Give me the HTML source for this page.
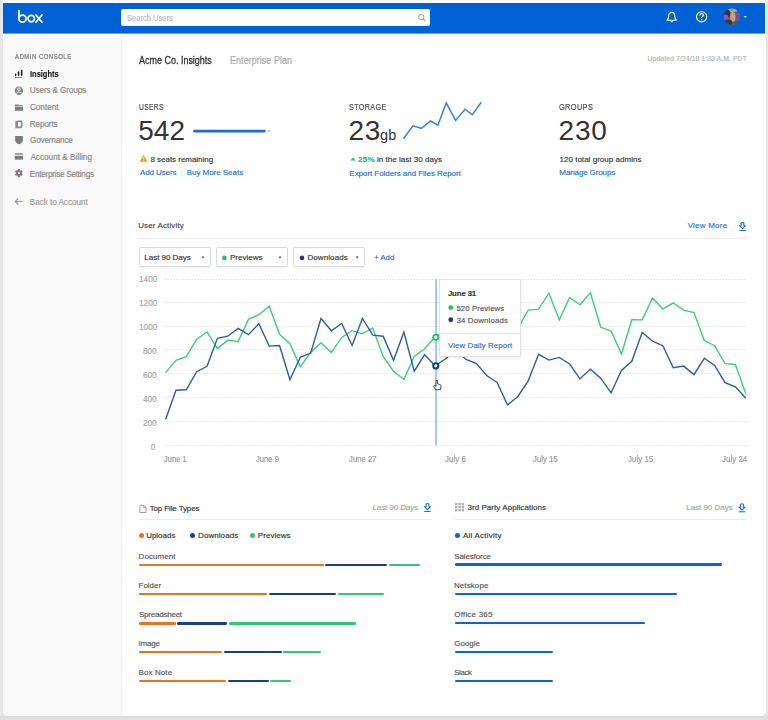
<!DOCTYPE html>
<html><head><meta charset="utf-8">
<style>
html,body{margin:0;padding:0;}
body{width:768px;height:720px;position:relative;overflow:hidden;background:#e6e6e6;font-family:"Liberation Sans",sans-serif;}
.abs{position:absolute;}
.t{position:absolute;white-space:nowrap;line-height:1;-webkit-text-stroke:0.15px currentColor;}
.win{position:absolute;left:3px;top:3px;width:762px;height:713px;background:#fff;border-radius:0 0 5px 5px;overflow:hidden;}
.hdr{position:absolute;left:3px;top:3px;width:762px;height:30px;background:#0061d5;}
.side{position:absolute;left:4px;top:34.6px;width:117px;height:681.4px;background:#f9f9f9;border-radius:0 0 0 5px;border-right:1px solid #f1f1f1;}
.search{position:absolute;left:121px;top:8.5px;width:309px;height:17.5px;background:#fff;border-radius:2px;}
.dd{position:absolute;top:247px;height:20px;border:1px solid #dadada;border-radius:2px;background:#fff;box-shadow:0 1px 1px rgba(0,0,0,0.04);box-sizing:border-box;}
.bar{position:absolute;height:2.4px;border-radius:1.2px;}
.o{background:#e8741c}.n{background:#1b3f8c}.g{background:#2fc77a}.b{background:#0b63d6}
.hl{position:absolute;height:1px;background:#ececec;}
.dot{position:absolute;width:5px;height:5px;border-radius:50%;}
.tip{position:absolute;left:439.1px;top:279.2px;width:81.6px;height:78.2px;background:#fff;border:1px solid #e2e2e2;box-sizing:border-box;box-shadow:0 1px 3px rgba(0,0,0,0.08);border-radius:1px;}
</style></head><body>
<div class="abs" style="left:3px;top:0;width:763px;height:3px;background:#f9f9f9;"></div>
<div class="abs" style="left:3px;top:1px;width:763px;height:715px;background:#fdfdfd;border-radius:0 0 5px 5px;"></div>
<div class="abs" style="left:0;top:716px;width:768px;height:4px;background:linear-gradient(#dcdcdc,#e3e3e3);"></div>
<div class="win"></div>
<div class="side"></div>
<svg class="abs" style="left:0;top:0" width="768" height="40"><rect x="3" y="3" width="762" height="30.6" fill="#0061d5"/></svg>
<div class="abs" style="left:122px;top:34px;width:643px;height:9px;background:linear-gradient(#f9f9f9,#fff);"></div>
<div class="search"></div>

<!-- header svg icons -->
<svg class="abs" style="left:0;top:0" width="768" height="40" viewBox="0 0 768 40">
 <g fill="none" stroke="#fff" stroke-width="1.75" stroke-linecap="round">
  <line x1="18.9" y1="10.7" x2="18.9" y2="18.6"/>
  <circle cx="22.5" cy="18.6" r="3.6"/>
  <circle cx="31.25" cy="18.6" r="3.25"/>
  <line x1="35.9" y1="15" x2="42" y2="22.2"/>
  <line x1="42" y1="15" x2="35.9" y2="22.2"/>
 </g>
 <!-- search icon -->
 <g fill="none" stroke="#a6a6a6" stroke-width="1.1">
  <circle cx="421.3" cy="17.1" r="2.6"/>
  <line x1="423.2" y1="19" x2="425.5" y2="21.2"/>
 </g>
 <!-- bell -->
 <g fill="none" stroke="#fff" stroke-width="1.1" stroke-linejoin="round">
  <path d="M667,20.2 C668.6,19 668.6,17.8 668.6,16.2 C668.6,13.8 670,12.4 671.7,12.4 C673.4,12.4 674.8,13.8 674.8,16.2 C674.8,17.8 674.8,19 676.4,20.2 Z"/>
 </g>
 <rect x="670.6" y="21" width="2.2" height="1.2" rx="0.6" fill="#fff"/>
 <!-- help -->
 <circle cx="701.6" cy="16.8" r="5.1" fill="none" stroke="#fff" stroke-width="1.1"/>
 <path d="M699.9,15.4 C699.9,13.1 703.4,13.1 703.4,15.1 C703.4,16.3 701.7,16.4 701.7,17.9" fill="none" stroke="#fff" stroke-width="1.05"/>
 <circle cx="701.7" cy="19.8" r="0.65" fill="#fff"/>
 <!-- avatar -->
 <defs><mask id="av"><circle cx="731.9" cy="16.7" r="8.2" fill="#fff"/></mask></defs>
 <g mask="url(#av)">
  <rect x="723" y="8" width="18" height="18" fill="#6a605a"/>
  <ellipse cx="731.5" cy="9.5" rx="7" ry="2.8" fill="#a8a098"/>
  <ellipse cx="727" cy="13.8" rx="3.5" ry="4" fill="#3d3531"/>
  <ellipse cx="725.6" cy="17.2" rx="2.6" ry="2.4" fill="#9450e2"/>
  <ellipse cx="738.8" cy="16" rx="2.2" ry="3.4" fill="#7a40e4"/>
  <ellipse cx="732.8" cy="17" rx="2.7" ry="5" fill="#c4a08a"/>
  <ellipse cx="728.5" cy="22.5" rx="4" ry="3" fill="#3f3835"/>
  <ellipse cx="736.5" cy="23" rx="3" ry="2.2" fill="#5a534f"/>
 </g>
 <path d="M743.6,16 L747,16 L745.3,18 Z" fill="#e6eefa"/>
</svg>

<!-- sidebar icons -->
<svg class="abs" style="left:0;top:40px" width="121" height="180" viewBox="0 40 121 180">
 <g fill="#1e1e1e">
  <rect x="14.9" y="73.4" width="1.5" height="2.6" rx="0.7"/>
  <rect x="17.8" y="71.2" width="1.5" height="4.8" rx="0.7"/>
  <rect x="20.9" y="69.8" width="1.5" height="6.2" rx="0.7"/>
 </g>
 <rect x="15" y="77" width="7.3" height="1" fill="#8a8a8a"/>
 <circle cx="18.9" cy="90.7" r="4.2" fill="#8a8a8a"/>
 <circle cx="18.9" cy="89.2" r="1.3" fill="none" stroke="#f9f9f9" stroke-width="0.8"/>
 <path d="M16.2,93.6 C16.8,91.6 21,91.6 21.6,93.6" fill="none" stroke="#f9f9f9" stroke-width="0.8"/>
 <path d="M15,104.4 L18,104.4 L18.8,105.3 L23,105.3 L23,110.8 L15,110.8 Z" fill="#7c7c7c"/>
 <rect x="15" y="106.3" width="8" height="0.6" fill="#f9f9f9"/>
 <path d="M15.4,121 L20.5,120.2 C22,120.2 22.6,121.5 22.6,124.2 C22.6,127 22,128.3 20.5,128.3 L15.4,128.3 Z" fill="#8a8a8a"/>
 <path d="M18,122 L19.8,122 C20.8,122 21,123 21,124.2 C21,125.4 20.8,126.5 19.8,126.5 L18,126.5 Z" fill="#f9f9f9"/>
 <path d="M15.2,136 L22.8,136 L22.8,140.5 C22.8,142.5 20.5,143.8 19,144.3 C17.5,143.8 15.2,142.5 15.2,140.5 Z" fill="#7a7a7a"/>
 <rect x="14.7" y="153.3" width="8.3" height="1.3" fill="#7a7a7a"/>
 <rect x="14.7" y="155.8" width="8.3" height="3.8" fill="#7a7a7a"/>
 <g transform="translate(18.9,173.1)">
  <g fill="#7a7a7a">
   <circle r="3"/>
   <rect x="-1" y="-4.1" width="2" height="8.2" rx="0.3"/>
   <rect x="-1" y="-4.1" width="2" height="8.2" rx="0.3" transform="rotate(60)"/>
   <rect x="-1" y="-4.1" width="2" height="8.2" rx="0.3" transform="rotate(120)"/>
  </g>
  <circle r="1.1" fill="#f9f9f9"/>
 </g>
 <g fill="none" stroke="#9a9a9a" stroke-width="1.1">
  <line x1="15.2" y1="201.5" x2="22.2" y2="201.5"/>
  <path d="M18.2,198.5 L15.2,201.5 L18.2,204.5"/>
 </g>
</svg>

<!-- metrics graphics -->
<svg class="abs" style="left:0;top:0" width="768" height="240" viewBox="0 0 768 240">
 <rect x="193" y="129.8" width="72.8" height="2.6" rx="1.3" fill="#1a6ad8"/>
 <circle cx="268.8" cy="131.1" r="1.3" fill="#b5cff3"/>
 <path d="M140.1,161.4 L143.55,155.2 L147,161.4 Z" fill="#f39a2e" stroke="#f39a2e" stroke-width="0.6" stroke-linejoin="round"/>
 <rect x="143.1" y="157.3" width="0.8" height="2" fill="#fff"/>
 <rect x="143.1" y="160" width="0.8" height="0.7" fill="#fff"/>
 <rect x="181.5" y="168.5" width="0.7" height="8" fill="#dcdcdc"/>
 <path d="M350.4,160.6 L353,157.4 L355.6,160.6 Z" fill="#26b96b"/>
 <polyline points="403.5,138.75 412.9,125.8 421.25,128.3 430.6,121 437.9,125.2 446.25,102.9 455.6,120.4 465,109.2 472.3,114.8 481.25,102.3" fill="none" stroke="#3a82e2" stroke-width="1.5"/>
</svg>

<div class="hl" style="left:139px;top:238px;width:608px;"></div>
<div class="dd" style="left:139px;width:72px;"></div>
<div class="dd" style="left:216px;width:72px;"></div>
<div class="dd" style="left:293px;width:72px;"></div>
<svg class="abs" style="left:0;top:240px" width="768" height="30" viewBox="0 240 768 30">
 <g fill="#444">
  <path d="M201.6,256.6 L204.4,256.6 L203,258.4 Z"/>
  <path d="M278.6,256.6 L281.4,256.6 L280,258.4 Z"/>
  <path d="M355.8,256.6 L358.6,256.6 L357.2,258.4 Z"/>
 </g>
 <circle cx="224.4" cy="257.9" r="2.3" fill="#22c25a"/>
 <circle cx="302" cy="257.9" r="2.3" fill="#1a3b8a"/>
</svg>
<svg class="abs" style="left:730px;top:215px" width="20" height="20" viewBox="730 215 20 20"><path d="M741.10,223.20 Q742.50,221.70 743.90,223.20 L743.90,225.70 L745.50,225.70 L742.50,228.70 L739.50,225.70 L741.10,225.70 Z" fill="none" stroke="#1b6fdb" stroke-width="1.1" stroke-linejoin="round"/><rect x="739.30" y="229.90" width="6.4" height="1.1" fill="#1b6fdb"/></svg>

<svg class="abs" width="768" height="720" viewBox="0 0 768 720" style="left:0;top:0">
<g stroke="#e4e4e4" stroke-width="1" stroke-dasharray="1.5 1.5"><line x1="164.5" y1="279.5" x2="747" y2="279.5" /><line x1="164.5" y1="302.5" x2="747" y2="302.5" /><line x1="164.5" y1="326.5" x2="747" y2="326.5" /><line x1="164.5" y1="349.5" x2="747" y2="349.5" /><line x1="164.5" y1="373.5" x2="747" y2="373.5" /><line x1="164.5" y1="397.5" x2="747" y2="397.5" /><line x1="164.5" y1="421.5" x2="747" y2="421.5" /><line x1="164.5" y1="445.5" x2="747" y2="445.5" /></g>
<polyline points="165.60,372.60 175.96,360.30 186.32,356.70 196.68,339.20 207.04,332.00 217.40,348.60 227.76,340.10 238.12,341.60 248.48,319.40 258.84,314.70 269.20,306.20 279.56,334.35 289.92,343.70 300.28,366.80 310.64,352.40 321.00,342.80 331.36,352.40 341.72,337.40 352.08,330.70 362.44,333.80 372.80,327.90 383.16,356.40 393.52,371.20 403.88,379.50 414.24,356.40 424.60,348.80 434.96,337.30 445.32,330.00 455.68,325.00 466.04,322.00 476.40,318.00 486.76,322.00 497.12,326.00 507.48,330.00 517.84,328.50 528.20,310.10 538.56,309.20 548.92,293.20 559.28,319.90 569.64,297.50 580.00,304.70 590.36,292.60 600.72,327.30 611.08,331.00 621.44,353.90 631.80,319.70 642.16,319.90 652.52,297.90 662.88,309.10 673.24,302.90 683.60,310.10 693.96,312.60 704.32,340.60 714.68,345.70 725.04,363.60 735.40,364.50 745.76,393.70" fill="none" stroke="#3fce78" stroke-width="1.4" stroke-linejoin="miter"/>
<polyline points="165.60,419.60 175.96,390.30 186.32,389.80 196.68,371.70 207.04,366.30 217.40,338.30 227.76,336.20 238.12,328.40 248.48,334.70 258.84,323.70 269.20,346.10 279.56,345.50 289.92,379.80 300.28,357.30 310.64,353.10 321.00,318.50 331.36,330.70 341.72,323.50 352.08,345.50 362.44,318.50 372.80,335.10 383.16,336.20 393.52,360.30 403.88,332.00 414.24,371.20 424.60,354.60 434.96,365.80 445.32,359.00 455.68,350.00 466.04,359.50 476.40,363.50 486.76,375.50 497.12,382.50 507.48,405.00 517.84,396.50 528.20,381.00 538.56,354.30 548.92,360.10 559.28,357.40 569.64,364.00 580.00,378.80 590.36,369.10 600.72,378.20 611.08,392.80 621.44,370.40 631.80,361.30 642.16,332.50 652.52,341.20 662.88,345.70 673.24,367.80 683.60,366.10 693.96,374.60 704.32,358.30 714.68,365.50 725.04,382.60 735.40,386.90 745.76,398.20" fill="none" stroke="#2d5da6" stroke-width="1.4" stroke-linejoin="miter"/>
<rect x="435.15" y="279.2" width="1.8" height="166" fill="#9cc2f0"/>
</svg>
<div class="tip"></div>
<div class="hl" style="left:440px;top:333px;width:80px;background:#e6e6e6"></div>
<svg class="abs" style="left:420px;top:290px" width="40" height="110" viewBox="420 290 40 110">
 <circle cx="435.8" cy="337.3" r="2.6" fill="#fff" stroke="#22c25a" stroke-width="1.8"/>
 <circle cx="435.8" cy="365.8" r="2.6" fill="#fff" stroke="#123c8c" stroke-width="2"/>
 <circle cx="450.8" cy="307.6" r="2.4" fill="#22c25a"/>
 <circle cx="450.8" cy="319.7" r="2.4" fill="#1a3b8a"/>
 <path d="M436,380.6 L437.6,380.6 L437.6,383.9 L440.4,384.6 L441,385.6 L440.5,389.6 L435.6,389.6 L433.6,386.2 L434.3,385.3 L436,386.4 Z" fill="#fff" stroke="#333" stroke-width="0.9" stroke-linejoin="round"/>
</svg>

<!-- bottom panels -->
<svg class="abs" style="left:130px;top:495px" width="640" height="25" viewBox="130 495 640 25">
 <path d="M139.9,505.2 L143.9,505.2 L146,507.3 L146,512.5 L139.9,512.5 Z" fill="none" stroke="#8a8a8a" stroke-width="0.8"/>
 <path d="M143.7,505.2 L143.7,507.5 L146,507.5" fill="none" stroke="#8a8a8a" stroke-width="0.7"/>
 <g fill="#b0b0b0">
  <rect x="455" y="503" width="2.4" height="2.4"/><rect x="458.3" y="503" width="2.4" height="2.4"/><rect x="461.6" y="503" width="2.4" height="2.4"/>
  <rect x="455" y="506" width="2.4" height="2.4"/><rect x="458.3" y="506" width="2.4" height="2.4"/><rect x="461.6" y="506" width="2.4" height="2.4"/>
  <rect x="455" y="509" width="2.4" height="2.4"/><rect x="458.3" y="509" width="2.4" height="2.4"/><rect x="461.6" y="509" width="2.4" height="2.4"/>
 </g>
 <path d="M426.10,504.20 Q427.50,502.70 428.90,504.20 L428.90,506.70 L430.50,506.70 L427.50,509.70 L424.50,506.70 L426.10,506.70 Z" fill="none" stroke="#1b6fdb" stroke-width="1.1" stroke-linejoin="round"/><rect x="424.30" y="510.90" width="6.4" height="1.1" fill="#1b6fdb"/><path d="M740.60,504.50 Q742.00,503.00 743.40,504.50 L743.40,507.00 L745.00,507.00 L742.00,510.00 L739.00,507.00 L740.60,507.00 Z" fill="none" stroke="#1b6fdb" stroke-width="1.1" stroke-linejoin="round"/><rect x="738.80" y="511.20" width="6.4" height="1.1" fill="#1b6fdb"/>
</svg>
<div class="hl" style="left:139px;top:519px;width:292.5px;"></div>
<div class="hl" style="left:455px;top:519px;width:292px;"></div>
<div class="dot o" style="left:138.5px;top:532.8px"></div>
<div class="dot n" style="left:190.4px;top:532.8px"></div>
<div class="dot g" style="left:250.4px;top:532.8px"></div>
<div class="dot b" style="left:455.2px;top:532.8px"></div>

<div class="bar o" style="left:139.2px;top:564.0px;width:184.9px"></div>
<div class="bar n" style="left:325.3px;top:564.0px;width:61.7px"></div>
<div class="bar g" style="left:388.6px;top:564.0px;width:31.2px"></div>
<div class="bar o" style="left:139.2px;top:592.6px;width:128.3px"></div>
<div class="bar n" style="left:269px;top:592.6px;width:66.9px"></div>
<div class="bar g" style="left:337.8px;top:592.6px;width:46.1px"></div>
<div class="bar o" style="left:139.2px;top:622.2px;width:36.5px"></div>
<div class="bar n" style="left:177.3px;top:622.2px;width:49.6px"></div>
<div class="bar g" style="left:228.8px;top:622.2px;width:127px"></div>
<div class="bar o" style="left:139.2px;top:650.8px;width:82.6px"></div>
<div class="bar n" style="left:223.75px;top:650.8px;width:57.85px"></div>
<div class="bar g" style="left:283.1px;top:650.8px;width:37.5px"></div>
<div class="bar o" style="left:139.2px;top:680.0px;width:86.9px"></div>
<div class="bar n" style="left:227.7px;top:680.0px;width:41px"></div>
<div class="bar g" style="left:269.8px;top:680.0px;width:21.5px"></div>

<div class="bar b" style="left:454.8px;top:563.3px;width:267.2px"></div>
<div class="bar b" style="left:454.8px;top:592.6px;width:222.7px"></div>
<div class="bar b" style="left:454.8px;top:621.8px;width:190.2px"></div>
<div class="bar b" style="left:454.8px;top:650.8px;width:98.5px"></div>
<div class="bar b" style="left:454.8px;top:680.1px;width:98.5px"></div>

<div class="t" style="left:14.80px;top:54.00px;font-size:6.4px;color:#6f6f6f;letter-spacing:0.500px;transform:scaleX(0.9418);transform-origin:0 0;">ADMIN CONSOLE</div>
<div class="t" style="left:29.95px;top:70.00px;font-size:8.4px;color:#222;font-weight:bold;transform:scaleX(0.8919);transform-origin:0 0;">Insights</div>
<div class="t" style="left:29.83px;top:87.00px;font-size:8.2px;color:#868686;letter-spacing:-0.147px;">Users &amp; Groups</div>
<div class="t" style="left:29.99px;top:104.00px;font-size:8.2px;color:#868686;letter-spacing:-0.038px;">Content</div>
<div class="t" style="left:29.74px;top:121.00px;font-size:8.2px;color:#868686;letter-spacing:-0.118px;">Reports</div>
<div class="t" style="left:29.99px;top:137.00px;font-size:8.2px;color:#868686;letter-spacing:-0.185px;">Governance</div>
<div class="t" style="left:30.40px;top:154.00px;font-size:8.2px;color:#868686;letter-spacing:0.008px;">Account &amp; Billing</div>
<div class="t" style="left:29.74px;top:171.00px;font-size:8.2px;color:#868686;letter-spacing:-0.271px;">Enterprise Settings</div>
<div class="t" style="left:29.74px;top:199.00px;font-size:8.2px;color:#9a9a9a;letter-spacing:-0.051px;">Back to Account</div>
<div class="t" style="left:126.90px;top:14.00px;font-size:8.4px;color:#b9b9b9;transform:scaleX(0.9027);transform-origin:0 0;">Search Users</div>
<div class="t" style="left:139.40px;top:55.00px;font-size:10.6px;color:#333;transform:scaleX(0.8472);transform-origin:0 0;-webkit-text-stroke:0.3px #333;">Acme Co. Insights</div>
<div class="t" style="left:230.07px;top:55.00px;font-size:10.6px;color:#a8a8a8;transform:scaleX(0.8574);transform-origin:0 0;">Enterprise Plan</div>
<div class="t" style="left:647.51px;top:55.00px;font-size:7.0px;color:#b5b5b5;letter-spacing:0.008px;">Updated 7/24/18 1:33 A.M. PDT</div>
<div class="t" style="left:138.93px;top:103.00px;font-size:8.4px;color:#4a4a4a;letter-spacing:0.400px;transform:scaleX(0.8063);transform-origin:0 0;">USERS</div>
<div class="t" style="left:349.11px;top:103.00px;font-size:8.4px;color:#4a4a4a;letter-spacing:0.400px;transform:scaleX(0.8635);transform-origin:0 0;">STORAGE</div>
<div class="t" style="left:559.03px;top:103.00px;font-size:8.4px;color:#4a4a4a;letter-spacing:0.400px;transform:scaleX(0.8839);transform-origin:0 0;">GROUPS</div>
<div class="t" style="left:138.28px;top:117.00px;font-size:28.0px;color:#333;letter-spacing:0.023px;-webkit-text-stroke:0;">542</div>
<div class="t" style="left:348.60px;top:117.00px;font-size:28.0px;color:#333;letter-spacing:0.468px;-webkit-text-stroke:0;">23</div>
<div class="t" style="left:380.02px;top:128.00px;font-size:14.5px;color:#333;letter-spacing:0.176px;-webkit-text-stroke:0;">gb</div>
<div class="t" style="left:558.60px;top:117.00px;font-size:28.0px;color:#333;letter-spacing:0.748px;-webkit-text-stroke:0;">230</div>
<div class="t" style="left:150.48px;top:156.00px;font-size:8.0px;color:#333;letter-spacing:-0.030px;">8 seats remaining</div>
<div class="t" style="left:140.00px;top:169.00px;font-size:8.0px;color:#1b6fdb;letter-spacing:-0.107px;">Add Users</div>
<div class="t" style="left:186.66px;top:169.00px;font-size:8.0px;color:#1b6fdb;letter-spacing:-0.033px;">Buy More Seats</div>
<div class="t" style="left:358.06px;top:156.00px;font-size:8.0px;color:#26b96b;font-weight:bold;letter-spacing:0.241px;">25%</div>
<div class="t" style="left:377.02px;top:156.00px;font-size:8.0px;color:#333;letter-spacing:0.024px;">in the last 30 days</div>
<div class="t" style="left:349.36px;top:170.00px;font-size:8.0px;color:#1b6fdb;letter-spacing:-0.050px;">Export Folders and Files Report</div>
<div class="t" style="left:559.44px;top:156.00px;font-size:8.0px;color:#333;letter-spacing:0.032px;">120 total group admins</div>
<div class="t" style="left:559.36px;top:169.00px;font-size:8.0px;color:#1b6fdb;letter-spacing:-0.124px;">Manage Groups</div>
<div class="t" style="left:138.19px;top:222.00px;font-size:8.0px;color:#444;letter-spacing:0.130px;">User Activity</div>
<div class="t" style="left:687.70px;top:222.00px;font-size:8.0px;color:#1b6fdb;letter-spacing:0.218px;">View More</div>
<div class="t" style="left:144.36px;top:254.00px;font-size:8.0px;color:#333;letter-spacing:-0.037px;">Last 90 Days</div>
<div class="t" style="left:229.96px;top:254.00px;font-size:8.0px;color:#333;letter-spacing:0.018px;">Previews</div>
<div class="t" style="left:307.46px;top:254.00px;font-size:8.0px;color:#333;letter-spacing:0.088px;">Downloads</div>
<div class="t" style="left:374.08px;top:254.00px;font-size:8.0px;color:#1b6fdb;letter-spacing:-0.090px;">+ Add</div>
<div class="t" style="left:139.05px;top:276.00px;font-size:8.2px;color:#a5a5a5;transform:scaleX(1.0000);transform-origin:0 0;">1400</div>
<div class="t" style="left:139.05px;top:300.00px;font-size:8.2px;color:#a5a5a5;transform:scaleX(1.0000);transform-origin:0 0;">1200</div>
<div class="t" style="left:139.05px;top:324.00px;font-size:8.2px;color:#a5a5a5;transform:scaleX(1.0000);transform-origin:0 0;">1000</div>
<div class="t" style="left:142.92px;top:348.00px;font-size:8.2px;color:#a5a5a5;transform:scaleX(1.0000);transform-origin:0 0;">800</div>
<div class="t" style="left:142.92px;top:372.00px;font-size:8.2px;color:#a5a5a5;transform:scaleX(1.0000);transform-origin:0 0;">600</div>
<div class="t" style="left:142.92px;top:396.00px;font-size:8.2px;color:#a5a5a5;transform:scaleX(1.0000);transform-origin:0 0;">400</div>
<div class="t" style="left:142.92px;top:420.00px;font-size:8.2px;color:#a5a5a5;transform:scaleX(1.0000);transform-origin:0 0;">200</div>
<div class="t" style="left:150.74px;top:444.00px;font-size:8.2px;color:#a5a5a5;transform:scaleX(1.0000);transform-origin:0 0;">0</div>
<div class="t" style="left:164.32px;top:456.00px;font-size:8.2px;color:#9a9a9a;transform:scaleX(0.9230);transform-origin:0 0;">June 1</div>
<div class="t" style="left:256.42px;top:456.00px;font-size:8.2px;color:#9a9a9a;transform:scaleX(0.9313);transform-origin:0 0;">June 9</div>
<div class="t" style="left:348.52px;top:456.00px;font-size:8.2px;color:#9a9a9a;transform:scaleX(0.9471);transform-origin:0 0;">June 27</div>
<div class="t" style="left:444.52px;top:456.00px;font-size:8.2px;color:#9a9a9a;transform:scaleX(0.9790);transform-origin:0 0;">July 6</div>
<div class="t" style="left:533.32px;top:456.00px;font-size:8.2px;color:#9a9a9a;transform:scaleX(0.9530);transform-origin:0 0;">July 15</div>
<div class="t" style="left:627.62px;top:456.00px;font-size:8.2px;color:#9a9a9a;transform:scaleX(0.9765);transform-origin:0 0;">July 15</div>
<div class="t" style="left:721.92px;top:456.00px;font-size:8.2px;color:#9a9a9a;transform:scaleX(0.9733);transform-origin:0 0;">July 24</div>
<div class="t" style="left:447.92px;top:290.00px;font-size:7.8px;color:#333;font-weight:bold;letter-spacing:-0.128px;">June 31</div>
<div class="t" style="left:456.39px;top:305.00px;font-size:7.8px;color:#555;letter-spacing:0.093px;">520 Previews</div>
<div class="t" style="left:456.47px;top:317.00px;font-size:7.8px;color:#555;letter-spacing:0.176px;">34 Downloads</div>
<div class="t" style="left:448.00px;top:342.00px;font-size:7.8px;color:#1b6fdb;letter-spacing:0.140px;">View Daily Report</div>
<div class="t" style="left:149.64px;top:505.00px;font-size:8.0px;color:#333;letter-spacing:-0.121px;">Top File Types</div>
<div class="t" style="left:372.46px;top:504.00px;font-size:8.0px;color:#a5a5a5;font-style:italic;letter-spacing:-0.090px;">Last 90 Days</div>
<div class="t" style="left:146.14px;top:532.00px;font-size:8.0px;color:#333;letter-spacing:-0.009px;">Uploads</div>
<div class="t" style="left:198.11px;top:532.00px;font-size:8.0px;color:#333;letter-spacing:0.056px;">Downloads</div>
<div class="t" style="left:257.86px;top:532.00px;font-size:8.0px;color:#333;letter-spacing:0.032px;">Previews</div>
<div class="t" style="left:138.56px;top:553.00px;font-size:8.0px;color:#555;letter-spacing:0.066px;">Document</div>
<div class="t" style="left:138.56px;top:582.00px;font-size:8.0px;color:#555;letter-spacing:-0.026px;">Folder</div>
<div class="t" style="left:138.88px;top:611.00px;font-size:8.0px;color:#555;letter-spacing:-0.216px;">Spreadsheet</div>
<div class="t" style="left:138.48px;top:640.00px;font-size:8.0px;color:#555;letter-spacing:-0.206px;">Image</div>
<div class="t" style="left:138.56px;top:669.00px;font-size:8.0px;color:#555;letter-spacing:0.089px;">Box Note</div>
<div class="t" style="left:467.46px;top:504.00px;font-size:8.0px;color:#333;letter-spacing:0.058px;">3rd Party Applications</div>
<div class="t" style="left:686.26px;top:504.00px;font-size:8.0px;color:#a5a5a5;letter-spacing:-0.028px;">Last 90 Days</div>
<div class="t" style="left:462.90px;top:532.00px;font-size:8.0px;color:#333;letter-spacing:0.232px;">All Activity</div>
<div class="t" style="left:454.28px;top:553.00px;font-size:8.0px;color:#555;letter-spacing:-0.121px;">Salesforce</div>
<div class="t" style="left:453.96px;top:582.00px;font-size:8.0px;color:#555;letter-spacing:0.090px;">Netskope</div>
<div class="t" style="left:454.28px;top:611.00px;font-size:8.0px;color:#555;letter-spacing:0.199px;">Office 365</div>
<div class="t" style="left:454.20px;top:640.00px;font-size:8.0px;color:#555;">Google</div>
<div class="t" style="left:454.28px;top:669.00px;font-size:8.0px;color:#555;letter-spacing:-0.481px;">Slack</div>
</body></html>
